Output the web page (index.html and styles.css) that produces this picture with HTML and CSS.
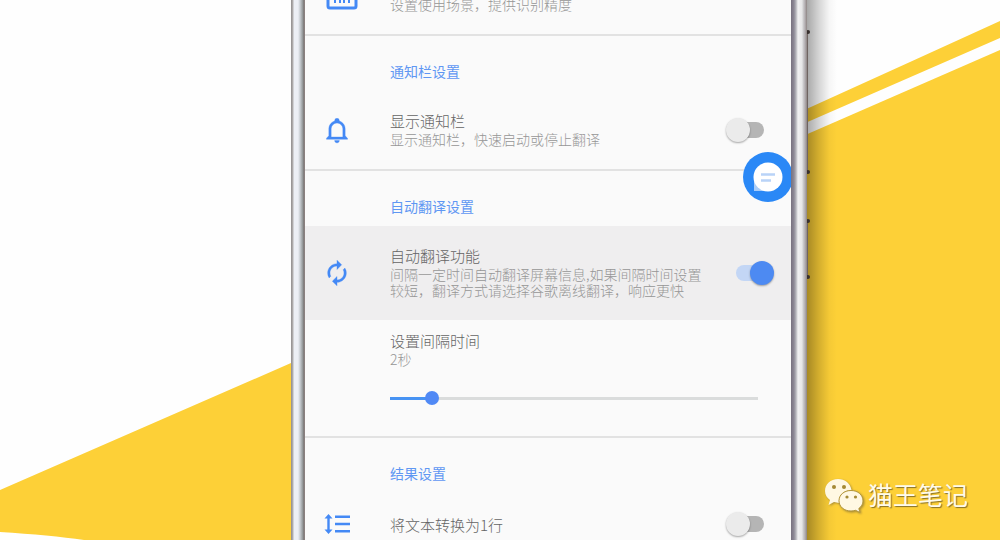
FILE: index.html
```html
<!DOCTYPE html>
<html lang="zh-CN">
<head>
  <meta charset="UTF-8">
  <meta name="viewport" content="width=device-width, initial-scale=1.0">
  <title>翻译设置</title>
  <link rel="stylesheet" href="styles.css">
</head>
<body>
  <svg class="backdrop" viewBox="0 0 1000 540" preserveAspectRatio="none" aria-hidden="true">
    <path fill="#fdd037" d="M0 490 L291 363 L500 270 V540 H84 Q50 535 0 532Z"/>
    <path fill="#fdd037" d="M780 121 L910 62 L1000 21 V38 L780 134Z"/>
    <path fill="#fdd037" d="M780 146 L1000 50 V540 H780Z"/>
  </svg>

  <main class="phone">
    <div class="edge edge-left"></div>
    <div class="screen">
      <div class="settings">
        <section class="group">
          <div class="row row-cut">
            <svg class="icon icon-wide" viewBox="0 0 36 24" fill="none" stroke="#4489f5" stroke-width="3" aria-hidden="true">
              <rect x="5" y="1" width="28" height="21" rx="2"/>
              <path d="M12 5v5M17 5v5M21 5v5M26 5v5M12 13v4M17 13v4M21 13v4M26 13v4" stroke-width="2"/>
            </svg>
            <div class="text">
              <div class="desc">设置使用场景，提供识别精度</div>
            </div>
          </div>
        </section>

        <section class="group">
          <h2 class="heading">通知栏设置</h2>
          <div class="row">
            <svg class="icon" viewBox="0 0 24 24" fill="#4489f5" stroke="#4489f5" stroke-width=".3" aria-hidden="true">
              <path d="M10 21h4c0 1.100-.9 2-2 2s-2-.9-2-2zm11-2v1H3v-1l2-2v-6c0-3.100 2.030-5.830 5-6.710V4a2 2 0 0 1 4 0v.29c2.970.88 5 3.610 5 6.710v6l2 2zm-4-8a5 5 0 0 0-10 0v7h10v-7z"/>
            </svg>
            <label class="text" for="notify">
              <span class="title">显示通知栏</span>
              <span class="desc">显示通知栏，快速启动或停止翻译</span>
            </label>
            <input class="switch" type="checkbox" role="switch" id="notify">
          </div>
        </section>

        <section class="group">
          <h2 class="heading">自动翻译设置</h2>
          <div class="row active">
            <svg class="icon" viewBox="0 0 24 24" fill="#4489f5" stroke="#4489f5" stroke-width=".3" aria-hidden="true">
              <path d="M12 6v3l4-4-4-4v3c-4.420 0-8 3.580-8 8 0 1.570.46 3.030 1.240 4.260L6.700 14.800c-.45-.83-.7-1.790-.7-2.800 0-3.310 2.690-6 6-6zm6.760 1.740L17.300 9.200c.44.84.7 1.790.7 2.800 0 3.310-2.690 6-6 6v-3l-4 4 4 4v-3c4.420 0 8-3.580 8-8 0-1.570-.46-3.030-1.240-4.260z"/>
            </svg>
            <label class="text" for="auto">
              <span class="title">自动翻译功能</span>
              <span class="desc">间隔一定时间自动翻译屏幕信息,如果间隔时间设置较短，翻译方式请选择谷歌离线翻译，响应更快</span>
            </label>
            <input class="switch" type="checkbox" role="switch" id="auto" checked>
          </div>
          <div class="interval">
            <label class="title" for="seconds">设置间隔时间</label>
            <output class="desc" for="seconds">2秒</output>
            <input class="slider" type="range" id="seconds" min="1" max="11" value="2">
          </div>
        </section>

        <section class="group">
          <h2 class="heading">结果设置</h2>
          <div class="row">
            <svg class="icon icon-lines" viewBox="0 0 28 24" fill="#4489f5" aria-hidden="true">
              <path d="M5.500 2L1.500 6.500h2.800v11H1.500L5.500 22l4-4.500H6.700v-11h2.800zM12 3.500h15v2.500H12zM12 10.800h15v2.500H12zM12 18h15v2.500H12z"/>
            </svg>
            <label class="text" for="oneline">
              <span class="title">将文本转换为1行</span>
            </label>
            <input class="switch" type="checkbox" role="switch" id="oneline">
          </div>
        </section>
      </div>

      <button class="bubble" type="button" aria-label="翻译">
        <svg viewBox="0 0 50 50" aria-hidden="true">
          <circle cx="25" cy="25" r="25" fill="#2a88f6"/>
          <path d="M11 25v14h14z" fill="#a9cdf9"/>
          <circle cx="25" cy="25" r="14.500" fill="#fff"/>
          <path d="M18 22.500h14M18 28.500h10" stroke="#b9d3f8" stroke-width="2.500"/>
        </svg>
      </button>
    </div>
    <div class="edge edge-right">
      <svg class="keys" viewBox="0 0 4 540" aria-hidden="true">
        <path d="M0 32v140M0 221v56" stroke="#6f6461" stroke-width="2"/>
        <circle cx="1" cy="32" r="2" fill="#38302e"/>
        <circle cx="1" cy="172" r="2" fill="#38302e"/>
        <circle cx="1" cy="221" r="2" fill="#38302e"/>
        <circle cx="1" cy="277" r="2" fill="#38302e"/>
      </svg>
    </div>
  </main>

  <footer class="account">
    <svg class="wechat" viewBox="0 0 40 36" aria-hidden="true">
      <path fill="#fff8e3" d="M14 1C6.500 1 1 6 1 13c0 4 2 7 5 9l-1.500 5 5.500-3 5 1c-1-8 5-13 12.500-13C26.500 5.500 21 1 14 1z"/>
      <path fill="#fff8e3" stroke="#b3963b" d="M27 12.500c-7 0-12 4.500-12 10.300S20 33 27 33c1.500 0 3-.3 4.500-.7L36 34.500l-1.200-4C37.500 28.500 39 26 39 23c0-6-5-10.500-12-10.500z"/>
      <g fill="#a58a35">
        <circle cx="10" cy="9" r="2"/>
        <circle cx="20" cy="9" r="2"/>
        <circle cx="23" cy="19" r="1.600"/>
        <circle cx="31.500" cy="19" r="1.600"/>
      </g>
    </svg>
    <span>猫王笔记</span>
  </footer>
</body>
</html>
```
FILE: styles.css
```css
* {
  box-sizing: border-box;
}
body {
  margin: 0;
  height: 100vh;
  position: relative;
  overflow: hidden;
  background: #fefefe;
  font-family: "Noto Sans CJK SC", sans-serif;
  color: #646464;
}
.backdrop {
  position: absolute;
  inset: 0;
  width: 100%;
  height: 100%;
}
.phone {
  position: relative;
  display: flex;
  width: 51.6%;
  height: 100%;
  margin-left: 29.1%;
}
.edge-left {
  width: 14px;
  background: linear-gradient(to right, #8f8c8c 0, #b5b3b3 2px, #eceff5 3px, #eceff5 7px, #c9ced3 9px, #8e9192 12px, #77706f 13px, #9c8f8e 14px);
}
.edge-right {
  position: relative;
  width: 16px;
  background: linear-gradient(to right, #77717f 0, #8d8996 3px, #b5b5bb 5px, #f1f1f2 7px, #e6e6e7 11px, #cfcfd1 12px, #b3aeb1 14px, #8d8583 16px);
}
/* shadow cast on the wall */
.edge-right::after {
  content: "";
  position: absolute;
  top: 0;
  left: 100%;
  width: 30px;
  height: 100%;
  background: linear-gradient(to right, rgba(0, 0, 0, 0.34), rgba(0, 0, 0, 0.16) 40%, rgba(0, 0, 0, 0.03) 75%, transparent);
}
.keys {
  position: absolute;
  top: 0;
  left: 100%;
  width: 4px;
  height: 540px;
  z-index: 1;
}
.screen {
  position: relative;
  flex: 1;
  overflow: hidden;
  background: #fafafa;
}
/* list is scrolled a little way down */
.settings {
  margin-top: -14px;
}
.group + .group {
  border-top: 2px solid #e2e2e2;
}
.heading {
  margin: 0;
  padding: 25px 16px 10px 85px;
  font-size: 14px;
  line-height: 20px;
  font-weight: 400;
  color: #5f97f3;
}
.row {
  display: flex;
  align-items: center;
  padding: 19px 17px 19px 18px;
}
.row-cut {
  align-items: flex-end;
  padding-top: 0;
}
.row.active {
  background: #efeeef;
}
.icon {
  width: 28px;
  height: 28px;
  margin-right: 39px;
}
.icon-wide {
  width: 36px;
  height: 24px;
  margin-right: 31px;
  margin-bottom: 5px;
}
.icon-lines {
  height: 24px;
}
.text {
  flex: 1;
  margin-right: 16px;
}
.title,
.desc {
  display: block;
}
.title {
  font-size: 15px;
  line-height: 21px;
  font-weight: 300;
}
.desc {
  padding-bottom: 3px;
  font-size: 14px;
  line-height: 16px;
  font-weight: 300;
  color: #969696;
}
.switch {
  appearance: none;
  position: relative;
  flex: none;
  width: 48px;
  height: 24px;
  margin: 0;
}
.switch::before {
  content: "";
  position: absolute;
  top: 4px;
  left: 10px;
  width: 28px;
  height: 16px;
  border-radius: 8px;
  background: #b5b5b5;
}
.switch::after {
  content: "";
  position: absolute;
  top: 0;
  left: 0;
  width: 24px;
  height: 24px;
  border-radius: 50%;
  background: #ebebeb;
  box-shadow: 0 1px 2px rgba(0, 0, 0, 0.35);
}
.switch:checked::before {
  background: #c3d6f5;
}
.switch:checked::after {
  left: 24px;
  background: #4d8af2;
}
.interval {
  padding: 10px 33px 28px 85px;
}
.slider {
  appearance: none;
  display: block;
  width: 100%;
  height: 20px;
  margin: 18px 0 0;
  background: linear-gradient(to right, #4793f3 11%, #dadcdc 11%) center / 100% 3px no-repeat;
}
.slider::-webkit-slider-thumb {
  appearance: none;
  width: 14px;
  height: 14px;
  border-radius: 50%;
  background: #5089f5;
}
.bubble {
  position: absolute;
  top: 152px;
  right: -2px;
  width: 50px;
  height: 50px;
  padding: 0;
  border: 0;
  border-radius: 50%;
  background: none;
}
.bubble svg {
  display: block;
}
.account {
  position: absolute;
  right: 32px;
  bottom: 26px;
  display: flex;
  align-items: flex-start;
  gap: 4px;
  font-size: 25px;
  line-height: 32px;
  font-weight: 400;
  color: #fffbea;
  text-shadow: 1px 1px 1px #85702b;
}
.wechat {
  width: 40px;
  height: 36px;
  filter: drop-shadow(1px 1px 1px #a58a35);
}
```
